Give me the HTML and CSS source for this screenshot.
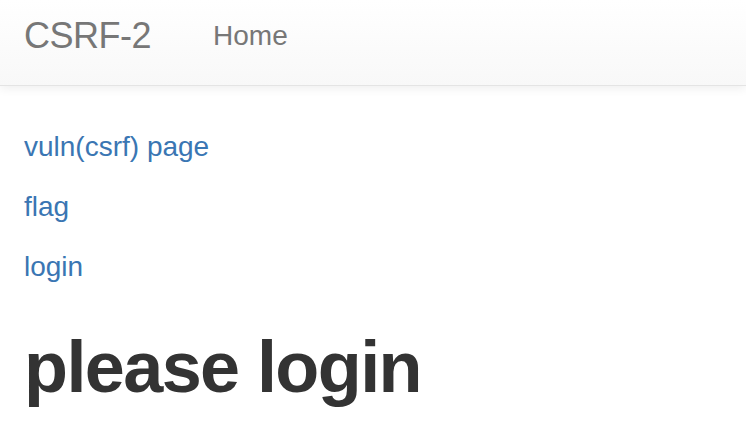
FILE: index.html
```html
<!DOCTYPE html>
<html>
<head>
<meta charset="utf-8">
<title>CSRF-2</title>
<link rel="stylesheet" href="styles.css">
</head>
<body>
<nav class="navbar">
  <a class="brand" href="#">CSRF-2</a>
  <ul class="nav">
    <li><a href="#">Home</a></li>
  </ul>
</nav>
<main class="container">
  <p><a href="#">vuln(csrf) page</a></p>
  <p><a href="#">flag</a></p>
  <p><a href="#">login</a></p>
  <h1 class="title">please login</h1>
</main>
</body>
</html>
```

FILE: styles.css
```css
html, body {
  margin: 0;
  padding: 0;
  background: #fff;
}
body {
  font-family: "Liberation Sans", Arial, Helvetica, sans-serif;
  font-size: 28px;
  line-height: 40px;
  color: #333;
}
.navbar {
  display: flex;
  align-items: flex-start;
  padding: 16px 0 0 24px;
  box-sizing: border-box;
  height: 86px;
  background-image: linear-gradient(to bottom, #ffffff 0, #f8f8f8 100%);
  border-bottom: 1px solid #e4e4e4;
  box-shadow: 0 2px 10px rgba(0, 0, 0, 0.075);
}
.brand {
  font-size: 36px;
  line-height: 40px;
  color: #777;
  text-decoration: none;
  text-shadow: 0 1px 0 rgba(255, 255, 255, 0.25);
  margin-right: 62px;
  letter-spacing: -0.5px;
}
.nav {
  list-style: none;
  margin: 0;
  padding: 0;
  display: flex;
}
.nav a {
  font-size: 28px;
  line-height: 40px;
  color: #777;
  text-decoration: none;
}
.container {
  padding: 41px 24px 0 24px;
}
.container p {
  margin: 0 0 20px 0;
}
.container a {
  color: #3a76b3;
  text-decoration: none;
}
.title {
  margin: 41px 0 20px 0;
  font-size: 72px;
  line-height: 79px;
  font-weight: 700;
  color: #333;
  letter-spacing: -1.6px;
}
```
